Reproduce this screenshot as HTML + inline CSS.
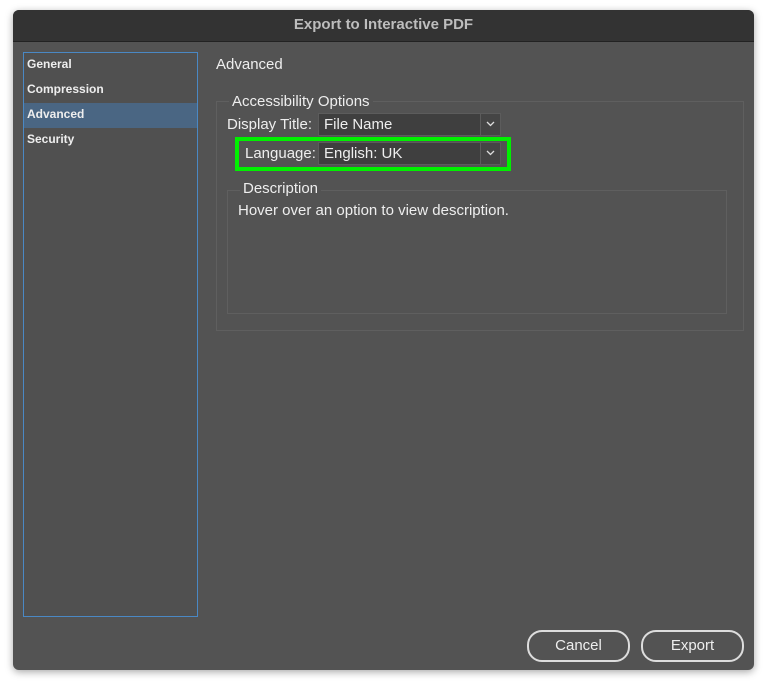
<!DOCTYPE html>
<html><head><style>
body{margin:0;width:768px;height:683px;background:#fff;font-family:"Liberation Sans",sans-serif;position:relative;overflow:hidden}
.dlg{position:absolute;left:13px;top:10px;width:741px;height:660px;background:#535353;border-radius:6px;box-shadow:0 2px 8px rgba(0,0,0,.35);overflow:hidden}
.tb{position:absolute;left:0;top:0;width:100%;height:31px;background:#333;border-bottom:1px solid #222;color:#bdbdbd;font-weight:bold;font-size:15px;text-align:center;line-height:29px}
.a{position:absolute;color:#eee;font-size:15px;white-space:nowrap}
.side{position:absolute;left:10px;top:42px;width:173px;height:563px;border:1px solid #4a88c4;background:#505050}
.side div{height:25px;line-height:23px;padding-left:3px;font-size:12px;color:#eee;font-weight:bold}
.sel{background:#4a6683}
.box{position:absolute;border:1px solid #5f5f5f}
.dd{position:absolute;height:21px;background:#3f3f3f;border:1px solid #5c5c5c;color:#eee;font-size:15px;line-height:21px;padding-left:5px;box-sizing:content-box}
.ar{position:absolute;width:19px;height:21px;background:#454545;border:1px solid #5c5c5c}
.ar svg{position:absolute;left:5px;top:7px}
.btn{position:absolute;top:620px;height:28px;border:2px solid #ddd;border-radius:15px;color:#eee;font-size:15px;text-align:center;line-height:28px}
</style></head><body>
<div class="dlg">
<div class="tb">Export to Interactive PDF</div>
<div class="side"><div>General</div><div>Compression</div><div class="sel">Advanced</div><div>Security</div></div>
<div class="a" style="left:203px;top:46px">Advanced</div>
<div class="box" style="left:203px;top:91px;width:526px;height:228px"></div>
<div class="a" style="left:216px;top:83px;background:#535353;padding:0 3px">Accessibility Options</div>
<div class="a" style="left:214px;top:106px">Display Title:</div>
<div class="dd" style="left:305px;top:103px;width:156px">File Name</div>
<div class="ar" style="left:467px;top:103px"><svg width="9" height="6"><path d="M1 1l3.5 3.5L8 1" stroke="#ddd" stroke-width="1.3" fill="none"/></svg></div>
<div style="position:absolute;left:222px;top:127px;width:268px;height:26px;border:4px solid #00f000"></div>
<div class="a" style="left:232px;top:135px">Language:</div>
<div class="dd" style="left:305px;top:132px;width:156px">English: UK</div>
<div class="ar" style="left:467px;top:132px"><svg width="9" height="6"><path d="M1 1l3.5 3.5L8 1" stroke="#ddd" stroke-width="1.3" fill="none"/></svg></div>
<div class="box" style="left:214px;top:180px;width:498px;height:122px"></div>
<div class="a" style="left:227px;top:170px;background:#535353;padding:0 3px">Description</div>
<div class="a" style="left:225px;top:192px">Hover over an option to view description.</div>
<div class="btn" style="left:514px;width:99px">Cancel</div>
<div class="btn" style="left:628px;width:99px">Export</div>
</div>
</body></html>
